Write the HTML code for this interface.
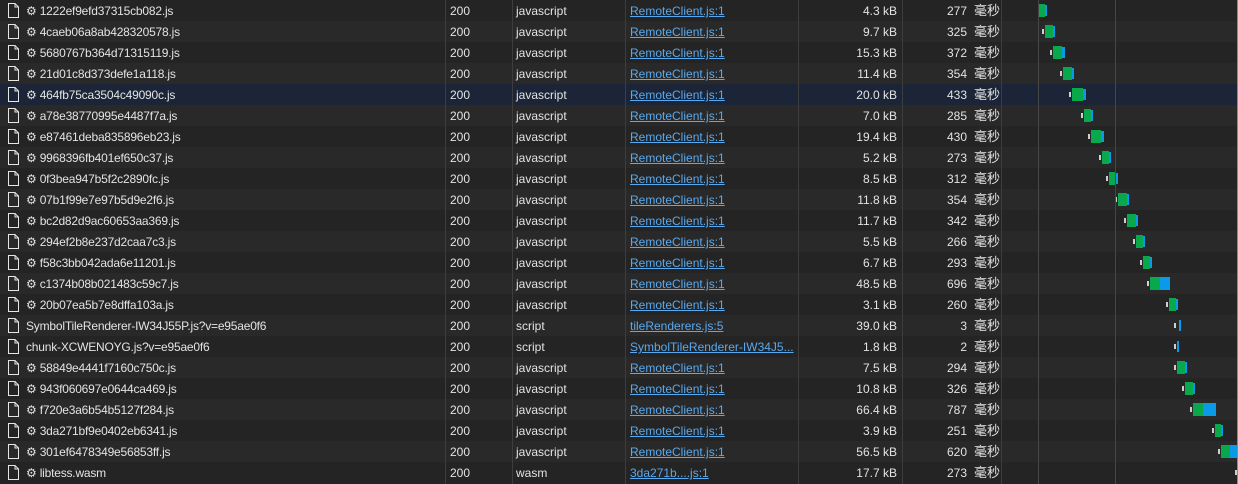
<!DOCTYPE html><html><head><meta charset="utf-8"><style>
*{margin:0;padding:0;box-sizing:border-box}
body{width:1238px;height:484px;background:#242424;overflow:hidden;position:relative;font-family:"Segoe UI","Liberation Sans","Noto Sans CJK SC",sans-serif;font-size:12px;color:#e3e3e3}
.r{position:absolute;left:0;width:1238px;height:21px;background:#242424}
.r:nth-child(even){background:#292929}
.r.h{background:#1b2537}
.r span{position:absolute;top:4px;line-height:15px;white-space:nowrap}
.ic{position:absolute;left:8px;top:3px;width:11px;height:15px}
.n{left:26px;letter-spacing:-0.2px}.s{left:450px}.t{left:516px}.i{left:630px;color:#5aa9ee;text-decoration:underline}
.z{right:341px}.m{right:271px}.u{left:974px;font-size:13px;top:3px!important}
.vl{position:absolute;top:0;width:1px;height:484px;background:#3d3d3d}
.tk{position:absolute;width:2px;height:5px;background:#cfcfcf;top:8px}
.g{position:absolute;top:4px;height:13px;background:#0aa84d}
.b{position:absolute;top:5px;height:11px;background:#0b9ae8}
</style></head><body>
<div id="rows">
<div class="r" style="top:0"><svg class="ic"><path d="M.5.5h6.5l3.5 3.5v10.5H.5z M7 .5v3.5h3.5" fill="none" stroke="#e6e6e6"/></svg><span class="n">⚙ 1222ef9efd37315cb082.js</span><span class="s">200</span><span class="t">javascript</span><span class="i">RemoteClient.js:1</span><span class="z">4.3 kB</span><span class="m">277</span><span class="u">毫秒</span><div class="g" style="left:1038px;width:7px"></div><div class="b" style="left:1045px;width:2px"></div></div>
<div class="r" style="top:21px"><svg class="ic"><path d="M.5.5h6.5l3.5 3.5v10.5H.5z M7 .5v3.5h3.5" fill="none" stroke="#e6e6e6"/></svg><span class="n">⚙ 4caeb06a8ab428320578.js</span><span class="s">200</span><span class="t">javascript</span><span class="i">RemoteClient.js:1</span><span class="z">9.7 kB</span><span class="m">325</span><span class="u">毫秒</span><div class="tk" style="left:1042px"></div><div class="g" style="left:1045px;width:8px"></div><div class="b" style="left:1053px;width:2px"></div></div>
<div class="r" style="top:42px"><svg class="ic"><path d="M.5.5h6.5l3.5 3.5v10.5H.5z M7 .5v3.5h3.5" fill="none" stroke="#e6e6e6"/></svg><span class="n">⚙ 5680767b364d71315119.js</span><span class="s">200</span><span class="t">javascript</span><span class="i">RemoteClient.js:1</span><span class="z">15.3 kB</span><span class="m">372</span><span class="u">毫秒</span><div class="tk" style="left:1050px"></div><div class="g" style="left:1053px;width:9px"></div><div class="b" style="left:1062px;width:3px"></div></div>
<div class="r" style="top:63px"><svg class="ic"><path d="M.5.5h6.5l3.5 3.5v10.5H.5z M7 .5v3.5h3.5" fill="none" stroke="#e6e6e6"/></svg><span class="n">⚙ 21d01c8d373defe1a118.js</span><span class="s">200</span><span class="t">javascript</span><span class="i">RemoteClient.js:1</span><span class="z">11.4 kB</span><span class="m">354</span><span class="u">毫秒</span><div class="tk" style="left:1060px"></div><div class="g" style="left:1063px;width:9px"></div><div class="b" style="left:1072px;width:2px"></div></div>
<div class="r h" style="top:84px"><svg class="ic"><path d="M.5.5h6.5l3.5 3.5v10.5H.5z M7 .5v3.5h3.5" fill="none" stroke="#e6e6e6"/></svg><span class="n">⚙ 464fb75ca3504c49090c.js</span><span class="s">200</span><span class="t">javascript</span><span class="i">RemoteClient.js:1</span><span class="z">20.0 kB</span><span class="m">433</span><span class="u">毫秒</span><div class="tk" style="left:1069px"></div><div class="g" style="left:1072px;width:11px"></div><div class="b" style="left:1083px;width:3px"></div></div>
<div class="r" style="top:105px"><svg class="ic"><path d="M.5.5h6.5l3.5 3.5v10.5H.5z M7 .5v3.5h3.5" fill="none" stroke="#e6e6e6"/></svg><span class="n">⚙ a78e38770995e4487f7a.js</span><span class="s">200</span><span class="t">javascript</span><span class="i">RemoteClient.js:1</span><span class="z">7.0 kB</span><span class="m">285</span><span class="u">毫秒</span><div class="tk" style="left:1081px"></div><div class="g" style="left:1084px;width:7px"></div><div class="b" style="left:1091px;width:2px"></div></div>
<div class="r" style="top:126px"><svg class="ic"><path d="M.5.5h6.5l3.5 3.5v10.5H.5z M7 .5v3.5h3.5" fill="none" stroke="#e6e6e6"/></svg><span class="n">⚙ e87461deba835896eb23.js</span><span class="s">200</span><span class="t">javascript</span><span class="i">RemoteClient.js:1</span><span class="z">19.4 kB</span><span class="m">430</span><span class="u">毫秒</span><div class="tk" style="left:1088px"></div><div class="g" style="left:1091px;width:10px"></div><div class="b" style="left:1101px;width:3px"></div></div>
<div class="r" style="top:147px"><svg class="ic"><path d="M.5.5h6.5l3.5 3.5v10.5H.5z M7 .5v3.5h3.5" fill="none" stroke="#e6e6e6"/></svg><span class="n">⚙ 9968396fb401ef650c37.js</span><span class="s">200</span><span class="t">javascript</span><span class="i">RemoteClient.js:1</span><span class="z">5.2 kB</span><span class="m">273</span><span class="u">毫秒</span><div class="tk" style="left:1099px"></div><div class="g" style="left:1102px;width:7px"></div><div class="b" style="left:1109px;width:2px"></div></div>
<div class="r" style="top:168px"><svg class="ic"><path d="M.5.5h6.5l3.5 3.5v10.5H.5z M7 .5v3.5h3.5" fill="none" stroke="#e6e6e6"/></svg><span class="n">⚙ 0f3bea947b5f2c2890fc.js</span><span class="s">200</span><span class="t">javascript</span><span class="i">RemoteClient.js:1</span><span class="z">8.5 kB</span><span class="m">312</span><span class="u">毫秒</span><div class="tk" style="left:1106px"></div><div class="g" style="left:1109px;width:7px"></div><div class="b" style="left:1116px;width:2px"></div></div>
<div class="r" style="top:189px"><svg class="ic"><path d="M.5.5h6.5l3.5 3.5v10.5H.5z M7 .5v3.5h3.5" fill="none" stroke="#e6e6e6"/></svg><span class="n">⚙ 07b1f99e7e97b5d9e2f6.js</span><span class="s">200</span><span class="t">javascript</span><span class="i">RemoteClient.js:1</span><span class="z">11.8 kB</span><span class="m">354</span><span class="u">毫秒</span><div class="tk" style="left:1115px"></div><div class="g" style="left:1118px;width:9px"></div><div class="b" style="left:1127px;width:2px"></div></div>
<div class="r" style="top:210px"><svg class="ic"><path d="M.5.5h6.5l3.5 3.5v10.5H.5z M7 .5v3.5h3.5" fill="none" stroke="#e6e6e6"/></svg><span class="n">⚙ bc2d82d9ac60653aa369.js</span><span class="s">200</span><span class="t">javascript</span><span class="i">RemoteClient.js:1</span><span class="z">11.7 kB</span><span class="m">342</span><span class="u">毫秒</span><div class="tk" style="left:1124px"></div><div class="g" style="left:1127px;width:9px"></div><div class="b" style="left:1136px;width:2px"></div></div>
<div class="r" style="top:231px"><svg class="ic"><path d="M.5.5h6.5l3.5 3.5v10.5H.5z M7 .5v3.5h3.5" fill="none" stroke="#e6e6e6"/></svg><span class="n">⚙ 294ef2b8e237d2caa7c3.js</span><span class="s">200</span><span class="t">javascript</span><span class="i">RemoteClient.js:1</span><span class="z">5.5 kB</span><span class="m">266</span><span class="u">毫秒</span><div class="tk" style="left:1133px"></div><div class="g" style="left:1136px;width:7px"></div><div class="b" style="left:1143px;width:2px"></div></div>
<div class="r" style="top:252px"><svg class="ic"><path d="M.5.5h6.5l3.5 3.5v10.5H.5z M7 .5v3.5h3.5" fill="none" stroke="#e6e6e6"/></svg><span class="n">⚙ f58c3bb042ada6e11201.js</span><span class="s">200</span><span class="t">javascript</span><span class="i">RemoteClient.js:1</span><span class="z">6.7 kB</span><span class="m">293</span><span class="u">毫秒</span><div class="tk" style="left:1140px"></div><div class="g" style="left:1143px;width:7px"></div><div class="b" style="left:1150px;width:2px"></div></div>
<div class="r" style="top:273px"><svg class="ic"><path d="M.5.5h6.5l3.5 3.5v10.5H.5z M7 .5v3.5h3.5" fill="none" stroke="#e6e6e6"/></svg><span class="n">⚙ c1374b08b021483c59c7.js</span><span class="s">200</span><span class="t">javascript</span><span class="i">RemoteClient.js:1</span><span class="z">48.5 kB</span><span class="m">696</span><span class="u">毫秒</span><div class="tk" style="left:1147px"></div><div class="g" style="left:1150px;width:10px"></div><div class="b" style="left:1160px;width:10px;top:4px;height:13px"></div></div>
<div class="r" style="top:294px"><svg class="ic"><path d="M.5.5h6.5l3.5 3.5v10.5H.5z M7 .5v3.5h3.5" fill="none" stroke="#e6e6e6"/></svg><span class="n">⚙ 20b07ea5b7e8dffa103a.js</span><span class="s">200</span><span class="t">javascript</span><span class="i">RemoteClient.js:1</span><span class="z">3.1 kB</span><span class="m">260</span><span class="u">毫秒</span><div class="tk" style="left:1166px"></div><div class="g" style="left:1169px;width:7px"></div><div class="b" style="left:1176px;width:2px"></div></div>
<div class="r" style="top:315px"><svg class="ic"><path d="M.5.5h6.5l3.5 3.5v10.5H.5z M7 .5v3.5h3.5" fill="none" stroke="#e6e6e6"/></svg><span class="n">SymbolTileRenderer-IW34J55P.js?v=e95ae0f6</span><span class="s">200</span><span class="t">script</span><span class="i">tileRenderers.js:5</span><span class="z">39.0 kB</span><span class="m">3</span><span class="u">毫秒</span><div class="tk" style="left:1174px"></div><div class="b" style="left:1179px;width:2px"></div></div>
<div class="r" style="top:336px"><svg class="ic"><path d="M.5.5h6.5l3.5 3.5v10.5H.5z M7 .5v3.5h3.5" fill="none" stroke="#e6e6e6"/></svg><span class="n">chunk-XCWENOYG.js?v=e95ae0f6</span><span class="s">200</span><span class="t">script</span><span class="i">SymbolTileRenderer-IW34J5...</span><span class="z">1.8 kB</span><span class="m">2</span><span class="u">毫秒</span><div class="tk" style="left:1174px"></div><div class="b" style="left:1177px;width:2px"></div></div>
<div class="r" style="top:357px"><svg class="ic"><path d="M.5.5h6.5l3.5 3.5v10.5H.5z M7 .5v3.5h3.5" fill="none" stroke="#e6e6e6"/></svg><span class="n">⚙ 58849e4441f7160c750c.js</span><span class="s">200</span><span class="t">javascript</span><span class="i">RemoteClient.js:1</span><span class="z">7.5 kB</span><span class="m">294</span><span class="u">毫秒</span><div class="tk" style="left:1174px"></div><div class="g" style="left:1177px;width:8px"></div><div class="b" style="left:1185px;width:2px"></div></div>
<div class="r" style="top:378px"><svg class="ic"><path d="M.5.5h6.5l3.5 3.5v10.5H.5z M7 .5v3.5h3.5" fill="none" stroke="#e6e6e6"/></svg><span class="n">⚙ 943f060697e0644ca469.js</span><span class="s">200</span><span class="t">javascript</span><span class="i">RemoteClient.js:1</span><span class="z">10.8 kB</span><span class="m">326</span><span class="u">毫秒</span><div class="tk" style="left:1182px"></div><div class="g" style="left:1185px;width:8px"></div><div class="b" style="left:1193px;width:2px"></div></div>
<div class="r" style="top:399px"><svg class="ic"><path d="M.5.5h6.5l3.5 3.5v10.5H.5z M7 .5v3.5h3.5" fill="none" stroke="#e6e6e6"/></svg><span class="n">⚙ f720e3a6b54b5127f284.js</span><span class="s">200</span><span class="t">javascript</span><span class="i">RemoteClient.js:1</span><span class="z">66.4 kB</span><span class="m">787</span><span class="u">毫秒</span><div class="tk" style="left:1190px"></div><div class="g" style="left:1193px;width:10px"></div><div class="b" style="left:1203px;width:13px;top:4px;height:13px"></div></div>
<div class="r" style="top:420px"><svg class="ic"><path d="M.5.5h6.5l3.5 3.5v10.5H.5z M7 .5v3.5h3.5" fill="none" stroke="#e6e6e6"/></svg><span class="n">⚙ 3da271bf9e0402eb6341.js</span><span class="s">200</span><span class="t">javascript</span><span class="i">RemoteClient.js:1</span><span class="z">3.9 kB</span><span class="m">251</span><span class="u">毫秒</span><div class="tk" style="left:1212px"></div><div class="g" style="left:1215px;width:6px"></div><div class="b" style="left:1221px;width:2px"></div></div>
<div class="r" style="top:441px"><svg class="ic"><path d="M.5.5h6.5l3.5 3.5v10.5H.5z M7 .5v3.5h3.5" fill="none" stroke="#e6e6e6"/></svg><span class="n">⚙ 301ef6478349e56853ff.js</span><span class="s">200</span><span class="t">javascript</span><span class="i">RemoteClient.js:1</span><span class="z">56.5 kB</span><span class="m">620</span><span class="u">毫秒</span><div class="tk" style="left:1218px"></div><div class="g" style="left:1221px;width:9px"></div><div class="b" style="left:1230px;width:7px;top:4px;height:13px"></div></div>
<div class="r" style="top:462px"><svg class="ic"><path d="M.5.5h6.5l3.5 3.5v10.5H.5z M7 .5v3.5h3.5" fill="none" stroke="#e6e6e6"/></svg><span class="n">⚙ libtess.wasm</span><span class="s">200</span><span class="t">wasm</span><span class="i">3da271b....js:1</span><span class="z">17.7 kB</span><span class="m">273</span><span class="u">毫秒</span><div class="tk" style="left:1235px"></div></div>
</div>
<div class="vl" style="left:445px"></div><div class="vl" style="left:512px"></div><div class="vl" style="left:625px"></div><div class="vl" style="left:798px"></div><div class="vl" style="left:902px"></div><div class="vl" style="left:1001px"></div><div class="vl" style="left:1038px;background:#474747"></div><div class="vl" style="left:1115px;background:#474747"></div><div class="vl" style="left:1237px;background:#8a8a8a"></div>
</body></html>
